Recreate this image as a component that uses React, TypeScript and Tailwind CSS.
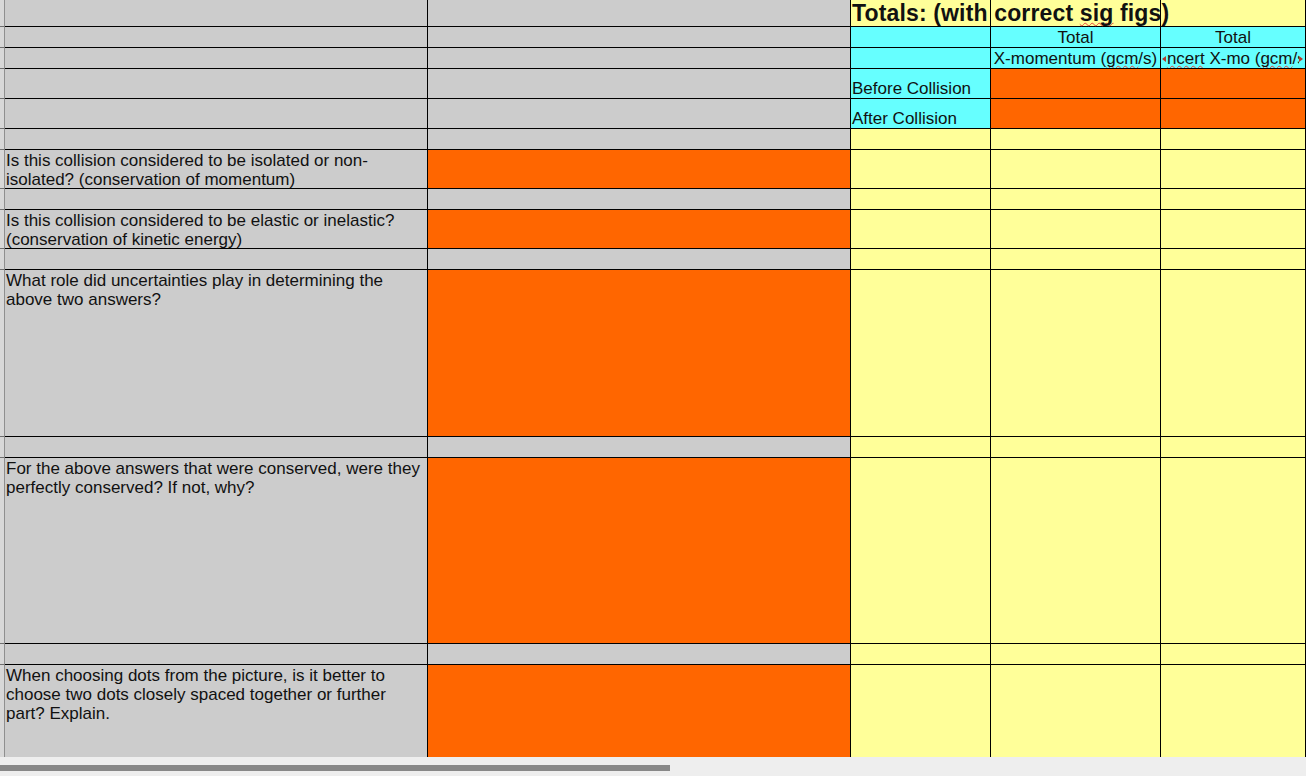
import React from "react";

const FONT = "font-['Liberation_Sans',Arial,Helvetica,sans-serif]";

type CellProps = {
  bg: "gray" | "orange" | "yellow" | "cyan";
  last?: boolean;
  className?: string;
  children?: React.ReactNode;
};

const BG: Record<CellProps["bg"], string> = {
  gray: "bg-[#cccccc]",
  orange: "bg-[#ff6600]",
  yellow: "bg-[#ffff99]",
  cyan: "bg-[#66ffff]",
};

function Cell({ bg, last, className = "", children }: CellProps) {
  return (
    <div
      className={`relative min-w-0 border-r border-black ${last ? "" : "border-b"} ${BG[bg]} ${className}`}
    >
      {children}
    </div>
  );
}

function Gutter({ last }: { last?: boolean }) {
  return (
    <div
      className={`bg-[#d8d8d8] border-r border-r-[#8f8f8f] ${last ? "" : "border-b border-b-[#6f6f6f]"}`}
    />
  );
}

// spell-check squiggle, sitting just under the baseline
function Wavy({ children }: { children: React.ReactNode }) {
  return (
    <span className="underline decoration-wavy decoration-[#e2453c] decoration-[1px] underline-offset-[1px] [text-decoration-skip-ink:none]">
      {children}
    </span>
  );
}

function Question({ lines }: { lines: string[] }) {
  return (
    <div className="px-[1px] pt-[1px] text-[17px] leading-[19px] text-[#111]">
      {lines.map((l, i) => (
        <div key={i} className="whitespace-nowrap">
          {l}
        </div>
      ))}
    </div>
  );
}

function Label({ children, center }: { children: React.ReactNode; center?: boolean }) {
  return (
    <div
      className={`flex h-full items-end overflow-hidden whitespace-nowrap px-[1px] text-[17px] leading-[19px] text-[#111] ${center ? "justify-center" : "justify-start"}`}
    >
      <span className="shrink-0">{children}</span>
    </div>
  );
}

function Spacer({ last }: { last?: boolean }) {
  return (
    <>
      <Gutter last={last} />
      <Cell bg="gray" last={last} />
      <Cell bg="gray" last={last} />
      <Cell bg="yellow" last={last} />
      <Cell bg="yellow" last={last} />
      <Cell bg="yellow" last={last} />
    </>
  );
}

function QuestionRow({ lines, last }: { lines: string[]; last?: boolean }) {
  return (
    <>
      <Gutter last={last} />
      <Cell bg="gray" last={last}>
        <Question lines={lines} />
      </Cell>
      <Cell bg="orange" last={last} />
      <Cell bg="yellow" last={last} />
      <Cell bg="yellow" last={last} />
      <Cell bg="yellow" last={last} />
    </>
  );
}

export default function App() {
  return (
    <div className={`${FONT} flex h-[776px] w-[1306px] flex-col overflow-hidden bg-[#efefef]`}>
      <div className="grid grid-cols-[5px_423px_423px_140px_170px_145px] grid-rows-[27px_21px_21px_30px_30px_21px_39px_21px_39px_21px_167px_21px_186px_21px_92px]">
        {/* heading row */}
        <Gutter />
        <Cell bg="gray" />
        <Cell bg="gray" />
        <Cell bg="yellow" className="overflow-visible">
          <div className="relative z-10 flex h-[26px] items-end whitespace-nowrap pl-[1px] text-[23px] font-bold leading-[26px] tracking-[0.15px] text-[#111]">
            <span>
              Totals: (with correct <Wavy>sig</Wavy> figs)
            </span>
          </div>
        </Cell>
        <Cell bg="yellow" />
        <Cell bg="yellow" />

        {/* column captions */}
        <Gutter />
        <Cell bg="gray" />
        <Cell bg="gray" />
        <Cell bg="cyan" />
        <Cell bg="cyan">
          <Label center>Total</Label>
        </Cell>
        <Cell bg="cyan">
          <Label center>Total</Label>
        </Cell>

        <Gutter />
        <Cell bg="gray" />
        <Cell bg="gray" />
        <Cell bg="cyan" />
        <Cell bg="cyan">
          <Label center>
            X-momentum (<Wavy>gcm</Wavy>/s)
          </Label>
        </Cell>
        <Cell bg="cyan">
          {/* text wider than the cell: centred, clipped inside the overflow markers */}
          <div className="absolute inset-y-0 left-[5px] right-[6px] overflow-hidden">
            <div className="absolute inset-y-0 left-[-5px] right-[-6px] flex items-end justify-center whitespace-nowrap text-[17px] leading-[19px] text-[#111]">
              <span className="shrink-0">
                U<Wavy>ncert</Wavy> X-mo (<Wavy>gcm</Wavy>/s)
              </span>
            </div>
          </div>
          <svg className="absolute left-[1px] top-[8px]" width="4" height="6" viewBox="0 0 4 6">
            <polygon points="4,0 0,3 4,6" fill="#b23a2e" />
          </svg>
          <svg className="absolute right-[2px] top-[8px]" width="4" height="6" viewBox="0 0 4 6">
            <polygon points="0,0 4,3 0,6" fill="#b23a2e" />
          </svg>
        </Cell>

        <Gutter />
        <Cell bg="gray" />
        <Cell bg="gray" />
        <Cell bg="cyan">
          <Label>Before Collision</Label>
        </Cell>
        <Cell bg="orange" />
        <Cell bg="orange" />

        <Gutter />
        <Cell bg="gray" />
        <Cell bg="gray" />
        <Cell bg="cyan">
          <Label>After Collision</Label>
        </Cell>
        <Cell bg="orange" />
        <Cell bg="orange" />

        <Spacer />
        <QuestionRow
          lines={[
            "Is this collision considered to be isolated or non-",
            "isolated? (conservation of momentum)",
          ]}
        />
        <Spacer />
        <QuestionRow
          lines={[
            "Is this collision considered to be elastic or inelastic?",
            "(conservation of kinetic energy)",
          ]}
        />
        <Spacer />
        <QuestionRow
          lines={[
            "What role did uncertainties play in determining the",
            "above two answers?",
          ]}
        />
        <Spacer />
        <QuestionRow
          lines={[
            "For the above answers that were conserved, were they",
            "perfectly conserved? If not, why?",
          ]}
        />
        <Spacer />
        <QuestionRow
          last
          lines={[
            "When choosing dots from the picture, is it better to",
            "choose two dots closely spaced together or further",
            "part? Explain.",
          ]}
        />
      </div>

      {/* horizontal scrollbar */}
      <div className="h-[19px] bg-[#eeeeee] pt-[8px]">
        <div className="h-[6px] w-[670px] bg-[#888888]" />
      </div>
    </div>
  );
}
